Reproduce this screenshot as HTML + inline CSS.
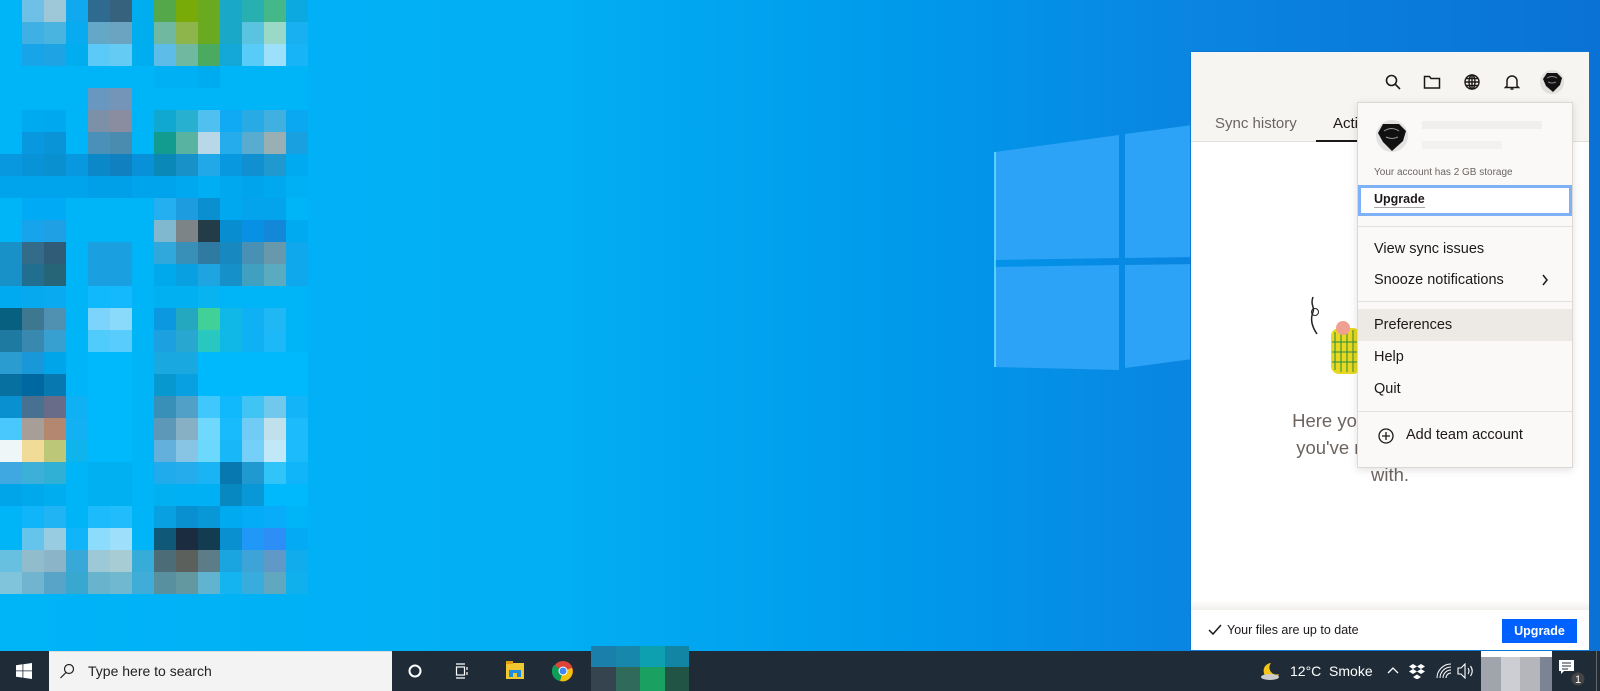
<!DOCTYPE html>
<html><head><meta charset="utf-8"><style>
*{margin:0;padding:0;box-sizing:border-box}
body{width:1600px;height:691px;overflow:hidden;position:relative;font-family:"Liberation Sans",sans-serif;background:linear-gradient(90deg,#00b4f8 0%,#02aef4 35%,#0098ea 58%,#0a84e0 75%,#0a72d4 100%)}
.grid{position:absolute;left:0;top:0;display:grid;grid-template-columns:repeat(14,22px);grid-auto-rows:22px}
.grid div{width:22px;height:22px}
.win{position:absolute;left:1190px;top:51px;width:400px;height:600px;background:#fff;border:1px solid #0a78d7}
.hdr{position:absolute;left:0;top:0;width:398px;height:90px;background:#f7f5f2;border-bottom:1px solid #e3e0dc}
.ic{position:absolute;top:21px}
.menu{position:absolute;left:1357px;top:102px;width:216px;height:366px;background:#faf9f8;border:1px solid #dcd9d5;box-shadow:0 2px 8px rgba(0,0,0,.12);color:#1e1919;font-size:14.5px}
.mi{position:absolute;left:16px}
.sep{position:absolute;left:0;width:214px;height:1px;background:#e4e1dd}
.tb{position:absolute;left:0;top:651px;width:1600px;height:40px;background:#1f2c38}
</style></head><body>
<div class="grid">
<div style="background:#00b4f8"></div><div style="background:#6fc0e6"></div><div style="background:#9ec8d8"></div><div style="background:#10a8ee"></div><div style="background:#2f6b90"></div><div style="background:#36627e"></div><div style="background:#00aef0"></div><div style="background:#55a84a"></div><div style="background:#78aa08"></div><div style="background:#6aaa20"></div><div style="background:#1aa8c8"></div><div style="background:#28b0b0"></div><div style="background:#44b888"></div><div style="background:#0ca8e0"></div>
<div style="background:#00b4f8"></div><div style="background:#3eb0e4"></div><div style="background:#4ab4e0"></div><div style="background:#08aaf0"></div><div style="background:#64a8c8"></div><div style="background:#6aa4c0"></div><div style="background:#00aef0"></div><div style="background:#70b8a0"></div><div style="background:#8eb44c"></div><div style="background:#6aaa20"></div><div style="background:#1aa8c8"></div><div style="background:#5ac4e0"></div><div style="background:#9ad8c8"></div><div style="background:#18b0f0"></div>
<div style="background:#00b4f8"></div><div style="background:#18a4e8"></div><div style="background:#1ea4e4"></div><div style="background:#00aef0"></div><div style="background:#5ccaf8"></div><div style="background:#64ccf4"></div><div style="background:#00aef0"></div><div style="background:#5ebce8"></div><div style="background:#70b8a0"></div><div style="background:#4aaa60"></div><div style="background:#14a8d8"></div><div style="background:#58ccf8"></div><div style="background:#9ce0fc"></div><div style="background:#18b4f8"></div>
<div style="background:#00b4f8"></div><div style="background:#00b4f8"></div><div style="background:#00b4f8"></div><div style="background:#00b4f8"></div><div style="background:#00b4f8"></div><div style="background:#00b4f8"></div><div style="background:#00b4f8"></div><div style="background:#00b0f4"></div><div style="background:#00b0f4"></div><div style="background:#00acf0"></div><div style="background:#00b4f8"></div><div style="background:#00b4f8"></div><div style="background:#00b4f8"></div><div style="background:#00b4f8"></div>
<div style="background:#00b4f8"></div><div style="background:#00b4f8"></div><div style="background:#00b4f8"></div><div style="background:#00b4f8"></div><div style="background:#6898c0"></div><div style="background:#7494b8"></div><div style="background:#00b4f8"></div><div style="background:#00b4f8"></div><div style="background:#00b4f8"></div><div style="background:#00b4f8"></div><div style="background:#00b4f8"></div><div style="background:#00b4f8"></div><div style="background:#00b4f8"></div><div style="background:#00b4f8"></div>
<div style="background:#00b4f8"></div><div style="background:#00aaf0"></div><div style="background:#00a8f0"></div><div style="background:#00b4f8"></div><div style="background:#7c90a8"></div><div style="background:#8a8ca0"></div><div style="background:#00b4f8"></div><div style="background:#10a8d0"></div><div style="background:#28b0d0"></div><div style="background:#50c0f0"></div><div style="background:#10aaf4"></div><div style="background:#28aae4"></div><div style="background:#40b0e0"></div><div style="background:#0aa8f0"></div>
<div style="background:#00b4f8"></div><div style="background:#0898e0"></div><div style="background:#0a94d8"></div><div style="background:#00b4f8"></div><div style="background:#4a90b8"></div><div style="background:#4a8cb0"></div><div style="background:#00b4f8"></div><div style="background:#129c90"></div><div style="background:#58b4a0"></div><div style="background:#b8d8e8"></div><div style="background:#24acec"></div><div style="background:#58acd0"></div><div style="background:#98b0b4"></div><div style="background:#18a0e0"></div>
<div style="background:#0898e0"></div><div style="background:#0892d8"></div><div style="background:#0890d0"></div><div style="background:#0898e0"></div><div style="background:#0a88c8"></div><div style="background:#1080c0"></div><div style="background:#0890d8"></div><div style="background:#0a88b8"></div><div style="background:#1890c8"></div><div style="background:#20a8e8"></div><div style="background:#0898e0"></div><div style="background:#1090d0"></div><div style="background:#2098d0"></div><div style="background:#00aaf0"></div>
<div style="background:#00a4ec"></div><div style="background:#00a4ec"></div><div style="background:#00a4ec"></div><div style="background:#00a4ec"></div><div style="background:#00a0e8"></div><div style="background:#00a0e8"></div><div style="background:#00a4ec"></div><div style="background:#00a4ec"></div><div style="background:#00a8f0"></div><div style="background:#00aef4"></div><div style="background:#00a8f0"></div><div style="background:#00a4ec"></div><div style="background:#00a8f0"></div><div style="background:#00b0f4"></div>
<div style="background:#00b4f8"></div><div style="background:#00aaf4"></div><div style="background:#00aaf4"></div><div style="background:#00b4f8"></div><div style="background:#00b4f8"></div><div style="background:#00b4f8"></div><div style="background:#00b4f8"></div><div style="background:#24b0f0"></div><div style="background:#1e9ce0"></div><div style="background:#0a90d0"></div><div style="background:#00a8f0"></div><div style="background:#04a4ec"></div><div style="background:#04a4ec"></div><div style="background:#00b4f8"></div>
<div style="background:#00b4f8"></div><div style="background:#18a4ec"></div><div style="background:#20a0e4"></div><div style="background:#00b4f8"></div><div style="background:#00b4f8"></div><div style="background:#00b4f8"></div><div style="background:#00b4f8"></div><div style="background:#80b8d0"></div><div style="background:#7c8488"></div><div style="background:#243c48"></div><div style="background:#088ed0"></div><div style="background:#0890e4"></div><div style="background:#1488d8"></div><div style="background:#00aaf0"></div>
<div style="background:#1890c8"></div><div style="background:#326c88"></div><div style="background:#305c78"></div><div style="background:#00b4f8"></div><div style="background:#1aa0e0"></div><div style="background:#1aa0e0"></div><div style="background:#00b4f8"></div><div style="background:#30a8dc"></div><div style="background:#3890b8"></div><div style="background:#2e7aa0"></div><div style="background:#1888c0"></div><div style="background:#4890b4"></div><div style="background:#6898ac"></div><div style="background:#10a8ec"></div>
<div style="background:#1890c8"></div><div style="background:#226e90"></div><div style="background:#266478"></div><div style="background:#00b4f8"></div><div style="background:#1aa0e0"></div><div style="background:#1aa0e0"></div><div style="background:#00b4f8"></div><div style="background:#00a8ec"></div><div style="background:#08a0e0"></div><div style="background:#1ea4e0"></div><div style="background:#1690c8"></div><div style="background:#40a0c0"></div><div style="background:#5aaac0"></div><div style="background:#10a8ec"></div>
<div style="background:#00aaf0"></div><div style="background:#06a8ee"></div><div style="background:#0aaaf0"></div><div style="background:#00b4f8"></div><div style="background:#10b8fc"></div><div style="background:#14b8fc"></div><div style="background:#00b4f8"></div><div style="background:#00b0f0"></div><div style="background:#00b0f0"></div><div style="background:#08b4f0"></div><div style="background:#00b4f8"></div><div style="background:#00b4f8"></div><div style="background:#00b4f8"></div><div style="background:#00b4f8"></div>
<div style="background:#086080"></div><div style="background:#3e7890"></div><div style="background:#5090b0"></div><div style="background:#00b4f8"></div><div style="background:#7cd4fc"></div><div style="background:#8adafc"></div><div style="background:#00b4f8"></div><div style="background:#0c98e0"></div><div style="background:#24a8c0"></div><div style="background:#40d098"></div><div style="background:#10b8e8"></div><div style="background:#10b0f4"></div><div style="background:#20b8f4"></div><div style="background:#00b4f8"></div>
<div style="background:#1e7aa0"></div><div style="background:#3888b0"></div><div style="background:#38a0d0"></div><div style="background:#00b4f8"></div><div style="background:#50ccfc"></div><div style="background:#58ccfc"></div><div style="background:#00b4f8"></div><div style="background:#1ca0e0"></div><div style="background:#28a8d0"></div><div style="background:#28c8c0"></div><div style="background:#10b8e8"></div><div style="background:#10b0f4"></div><div style="background:#1cb8f8"></div><div style="background:#00b4f8"></div>
<div style="background:#2a9cd0"></div><div style="background:#1898d8"></div><div style="background:#00a4e8"></div><div style="background:#00b4f8"></div><div style="background:#00b8fc"></div><div style="background:#00b8fc"></div><div style="background:#00b4f8"></div><div style="background:#1aa8e0"></div><div style="background:#1aa8e0"></div><div style="background:#00b8fc"></div><div style="background:#00b8fc"></div><div style="background:#00b8fc"></div><div style="background:#00b8fc"></div><div style="background:#00b8fc"></div>
<div style="background:#0870a0"></div><div style="background:#0068a0"></div><div style="background:#0878b0"></div><div style="background:#00b4f8"></div><div style="background:#00b8fc"></div><div style="background:#00b8fc"></div><div style="background:#00b4f8"></div><div style="background:#0898d0"></div><div style="background:#08a0e0"></div><div style="background:#00b8fc"></div><div style="background:#00b8fc"></div><div style="background:#00b8fc"></div><div style="background:#00b8fc"></div><div style="background:#00b8fc"></div>
<div style="background:#0890d0"></div><div style="background:#487090"></div><div style="background:#686c88"></div><div style="background:#10b0f4"></div><div style="background:#00b8fc"></div><div style="background:#00b8fc"></div><div style="background:#00b4f8"></div><div style="background:#3890b8"></div><div style="background:#50a0c8"></div><div style="background:#40c8fc"></div><div style="background:#10b8fc"></div><div style="background:#40c4f4"></div><div style="background:#70c8ec"></div><div style="background:#14b4f8"></div>
<div style="background:#48c8fc"></div><div style="background:#a89e98"></div><div style="background:#b48870"></div><div style="background:#14b0f4"></div><div style="background:#00b8fc"></div><div style="background:#00b8fc"></div><div style="background:#00b4f8"></div><div style="background:#5e98b8"></div><div style="background:#88b0c4"></div><div style="background:#70d8fc"></div><div style="background:#18bcfc"></div><div style="background:#70ccf4"></div><div style="background:#c0e0ec"></div><div style="background:#1cbcfc"></div>
<div style="background:#eef6f8"></div><div style="background:#f0dc98"></div><div style="background:#bcc878"></div><div style="background:#10b4ec"></div><div style="background:#00b8fc"></div><div style="background:#00b8fc"></div><div style="background:#00b4f8"></div><div style="background:#64b0dc"></div><div style="background:#88c4e4"></div><div style="background:#6cd8fc"></div><div style="background:#18b8f8"></div><div style="background:#74d0f8"></div><div style="background:#c0e8f8"></div><div style="background:#1cbcfc"></div>
<div style="background:#40a8e0"></div><div style="background:#3cb0d8"></div><div style="background:#30b0d4"></div><div style="background:#00b4f8"></div><div style="background:#00b0f0"></div><div style="background:#00b0f0"></div><div style="background:#00b4f8"></div><div style="background:#20acec"></div><div style="background:#24acec"></div><div style="background:#1ab4f4"></div><div style="background:#0878b0"></div><div style="background:#2098d0"></div><div style="background:#30c4f8"></div><div style="background:#10b4f8"></div>
<div style="background:#00a4e8"></div><div style="background:#00a8ec"></div><div style="background:#00aef0"></div><div style="background:#00b4f8"></div><div style="background:#00b0f0"></div><div style="background:#00b0f0"></div><div style="background:#00b4f8"></div><div style="background:#00b0f0"></div><div style="background:#00b0f4"></div><div style="background:#00b0f4"></div><div style="background:#0888c0"></div><div style="background:#0898d8"></div><div style="background:#00b8fc"></div><div style="background:#00b8fc"></div>
<div style="background:#00b4f8"></div><div style="background:#10b4f8"></div><div style="background:#20b4f4"></div><div style="background:#00b4f8"></div><div style="background:#1cbcfc"></div><div style="background:#20bcfc"></div><div style="background:#00b4f8"></div><div style="background:#08a0e0"></div><div style="background:#0890d0"></div><div style="background:#0898d8"></div><div style="background:#00aaf0"></div><div style="background:#04acf8"></div><div style="background:#08acf8"></div><div style="background:#00b4f8"></div>
<div style="background:#00b4f8"></div><div style="background:#64c4ec"></div><div style="background:#98cce0"></div><div style="background:#10b4f8"></div><div style="background:#8cdcfc"></div><div style="background:#9ee0fc"></div><div style="background:#00b4f8"></div><div style="background:#105878"></div><div style="background:#1c2c40"></div><div style="background:#143c50"></div><div style="background:#0890d0"></div><div style="background:#2098f8"></div><div style="background:#2e8ef8"></div><div style="background:#04aaf4"></div>
<div style="background:#68c0e0"></div><div style="background:#90bccc"></div><div style="background:#8cb4c8"></div><div style="background:#38a8d8"></div><div style="background:#9cc8d8"></div><div style="background:#a8ccd4"></div><div style="background:#38acd8"></div><div style="background:#4c6c78"></div><div style="background:#5c605c"></div><div style="background:#5c7c88"></div><div style="background:#1aa4e0"></div><div style="background:#3ea4d8"></div><div style="background:#6098c8"></div><div style="background:#10acec"></div>
<div style="background:#80c4dc"></div><div style="background:#70b4d0"></div><div style="background:#58a4c8"></div><div style="background:#38a8d0"></div><div style="background:#68b4cc"></div><div style="background:#70b8d0"></div><div style="background:#40acd8"></div><div style="background:#5890a0"></div><div style="background:#6498a0"></div><div style="background:#60b4d0"></div><div style="background:#14b4f0"></div><div style="background:#38acdc"></div><div style="background:#60a8c0"></div><div style="background:#10b0ec"></div>
</div>

<!-- windows logo -->
<svg style="position:absolute;left:990px;top:120px" width="210" height="260">
<polygon points="5,32 129,15 129,138 5,140" fill="#2ca3f6"/>
<polygon points="135,14 210,4 210,137 135,138" fill="#2ca3f6"/>
<polygon points="5,147 129,145 129,250 5,247" fill="#2ca3f6"/>
<polygon points="135,145 210,144 210,238 135,248" fill="#2ca3f6"/>
<line x1="5" y1="32" x2="5" y2="247" stroke="#6ee0ff" stroke-width="1.5"/>
</svg>

<div class="win">
 <div class="hdr">
  <svg class="ic" style="left:193px" width="18" height="18" viewBox="0 0 18 18" fill="none" stroke="#1e1919" stroke-width="1.6"><circle cx="7.5" cy="7.5" r="5"/><path d="M11 11l5 5"/></svg>
  <svg class="ic" style="left:232px" width="18" height="18" viewBox="0 0 18 18" fill="none" stroke="#1e1919" stroke-width="1.5"><path d="M1.5 3.5h5l1.5 2h8.5v9.5h-15z"/></svg>
  <svg class="ic" style="left:272px" width="18" height="18" viewBox="0 0 18 18" fill="none" stroke="#1e1919" stroke-width="1.4"><circle cx="9" cy="9" r="7"/><ellipse cx="9" cy="9" rx="3" ry="7"/><path d="M2 9h14M3 5.5h12M3 12.5h12M9 2v14"/></svg>
  <svg class="ic" style="left:312px" width="18" height="18" viewBox="0 0 18 18" fill="none" stroke="#1e1919" stroke-width="1.5"><path d="M4 13V8a5 5 0 0 1 10 0v5l1.5 1.5h-13z"/><path d="M7.5 16h3"/></svg>
  <svg style="position:absolute;left:348px;top:17px" width="26" height="26" viewBox="0 0 26 26"><circle cx="13" cy="13" r="12" fill="#e2e0de"/><polygon points="4,10 8,4 18,4 23,9 21,16 14,23 7,17" fill="#111"/><path d="M8 9q5-3 10 0M9 13q4 2 8 0" stroke="#888" fill="none"/></svg>
  <div style="position:absolute;left:24px;top:63px;font-size:15px;color:#6a6562">Sync history</div>
  <div style="position:absolute;left:142px;top:63px;font-size:15px;color:#1e1919">Activity</div>
  <div style="position:absolute;left:125px;top:88px;width:45px;height:2px;background:#1e1919"></div>
 </div>
 <div style="position:absolute;left:0;width:398px;top:355px;text-align:center;font-size:18.5px;color:#6d6460;line-height:27px">Here you'll see files that<br>you've recently worked<br>with.</div>
 <svg style="position:absolute;left:112px;top:240px" width="70" height="90"><path d="M10 5c-3 8 2 10 0 15s-3 12 4 22" stroke="#222" fill="none" stroke-width="1.5"/><circle cx="12" cy="20" r="3.5" stroke="#222" fill="none"/><rect x="28" y="36" width="30" height="46" rx="8" fill="#e8d820"/><path d="M32 40v38M38 38v42M44 38v42M50 38v42M29 50h28M29 60h28M29 70h28" stroke="#2a8a40"/><circle cx="40" cy="36" r="7" fill="#f0a090"/></svg>
 <div style="position:absolute;left:0;top:548px;width:398px;height:10px;background:linear-gradient(#fff,#f2efec)"></div>
 <div style="position:absolute;left:0;top:558px;width:398px;height:40px;background:#fff">
  <svg style="position:absolute;left:17px;top:14px" width="14" height="12" viewBox="0 0 14 12" fill="none" stroke="#1e1919" stroke-width="1.5"><path d="M1 6l4 4 8-9"/></svg>
  <div style="position:absolute;left:36px;top:13px;font-size:12.5px;color:#1e1919">Your files are up to date</div>
  <div style="position:absolute;left:311px;top:9px;width:75px;height:24px;background:#0061fe;color:#fff;font-size:12.5px;font-weight:bold;text-align:center;line-height:24px">Upgrade</div>
 </div>
</div>

<div class="menu">
 <svg style="position:absolute;left:17px;top:16px" width="34" height="34" viewBox="0 0 34 34"><circle cx="17" cy="17" r="16" fill="#e4e2e0"/><polygon points="3,14 8,5 24,5 31,12 28,22 17,32 8,23" fill="#111"/><path d="M9 12q8-5 15 0M11 18q6 3 12 0" stroke="#999" fill="none"/></svg>
 <div style="position:absolute;left:64px;top:18px;width:120px;height:8px;background:#f1efed"></div>
 <div style="position:absolute;left:64px;top:38px;width:80px;height:8px;background:#f3f1ef"></div>
 <div style="position:absolute;left:16px;top:64px;font-size:10px;color:#6a6562">Your account has 2 GB storage</div>
 <div style="position:absolute;left:0;top:82px;width:214px;height:31px;border:3px solid #7fb1f6;background:#fff"></div>
 <div style="position:absolute;left:16px;top:89px;font-size:12.5px;font-weight:bold;color:#1e1919;border-bottom:1px solid #aaa;line-height:15px">Upgrade</div>
 <div class="sep" style="top:123px"></div>
 <div class="mi" style="top:138px">View sync issues</div>
 <div class="mi" style="top:169px">Snooze notifications</div>
 <svg style="position:absolute;left:183px;top:171px" width="8" height="12" fill="none" stroke="#1e1919" stroke-width="1.5"><path d="M2 1l4 5-4 5"/></svg>
 <div class="sep" style="top:198px"></div>
 <div style="position:absolute;left:0;top:206px;width:214px;height:32px;background:#edeae6"></div>
 <div class="mi" style="top:214px">Preferences</div>
 <div class="mi" style="top:246px">Help</div>
 <div class="mi" style="top:278px">Quit</div>
 <div class="sep" style="top:308px"></div>
 <svg style="position:absolute;left:20px;top:325px" width="16" height="16" viewBox="0 0 16 16" fill="none" stroke="#1e1919" stroke-width="1.3"><circle cx="8" cy="8" r="7"/><path d="M8 4v8M4 8h8"/></svg>
 <div class="mi" style="left:48px;top:324px">Add team account</div>
</div>

<div class="tb">
 <svg style="position:absolute;left:16px;top:12px" width="16" height="16" viewBox="0 0 16 16" fill="#fff"><path d="M0 2.2l6.5-.9v6.2H0zM7.3 1.2L16 0v7.5H7.3zM0 8.3h6.5v6.3L0 13.7zM7.3 8.3H16V16l-8.7-1.2z"/></svg>
 <div style="position:absolute;left:49px;top:0;width:343px;height:40px;background:#f3f3f3;border-top:1px solid #ddd"></div>
 <svg style="position:absolute;left:59px;top:12px" width="16" height="16" viewBox="0 0 16 16" fill="none" stroke="#222" stroke-width="1.2"><circle cx="10" cy="6" r="4.5"/><path d="M7 9.5L1.5 15"/></svg>
 <div style="position:absolute;left:88px;top:12px;font-size:14px;color:#222">Type here to search</div>
 <svg style="position:absolute;left:408px;top:13px" width="14" height="14"><circle cx="7" cy="7" r="5.5" fill="none" stroke="#fff" stroke-width="2"/></svg>
 <svg style="position:absolute;left:455px;top:12px" width="14" height="16" fill="none" stroke="#fff" stroke-width="1.2"><path d="M1 1h9M1 15h9"/><rect x="1.5" y="4" width="8" height="8"/><path d="M12 4v3M12 9v3"/></svg>
 <svg style="position:absolute;left:506px;top:10px" width="18" height="20"><rect x="0" y="2" width="18" height="16" fill="#f2c830"/><rect x="0" y="0" width="7" height="3" fill="#e0a010"/><rect x="3" y="9" width="12" height="7" fill="#1d8de0"/><rect x="7" y="12" width="4" height="4" fill="#f2c830"/></svg>
 <svg style="position:absolute;left:552px;top:9px" width="22" height="22" viewBox="0 0 22 22"><circle cx="11" cy="11" r="10" fill="#db4437"/><path d="M11 11L20 8A10 10 0 0 1 8 21z" fill="#f4c20d"/><path d="M11 11L8 21A10 10 0 0 1 2 5z" fill="#0f9d58"/><circle cx="11" cy="11" r="4.5" fill="#fff"/><circle cx="11" cy="11" r="3.5" fill="#4285f4"/></svg>
 <div style="position:absolute;left:591px;top:-5px;width:98px;height:21px;display:flex"><div style="flex:1;background:#1a7fab"></div><div style="flex:1;background:#1788ac"></div><div style="flex:1;background:#0ca0b0"></div><div style="flex:1;background:#1284a4"></div></div>
 <div style="position:absolute;left:591px;top:16px;width:98px;height:24px;display:flex"><div style="flex:1;background:#364450"></div><div style="flex:1;background:#2f6a5a"></div><div style="flex:1;background:#1aa060"></div><div style="flex:1;background:#225446"></div></div>
 <svg style="position:absolute;left:1259px;top:10px" width="22" height="20"><path d="M12 2a8 8 0 1 0 8 11a7 7 0 0 1-8-11z" fill="#f5c518"/><ellipse cx="11" cy="16" rx="9" ry="3" fill="#ccc"/></svg>
 <div style="position:absolute;left:1290px;top:12px;font-size:14px;color:#fff">12°C&nbsp; Smoke</div>
 <svg style="position:absolute;left:1387px;top:15px" width="12" height="8" fill="none" stroke="#fff" stroke-width="1.3"><path d="M1 7l5-5 5 5"/></svg>
 <svg style="position:absolute;left:1409px;top:12px" width="16" height="16" fill="#fff"><path d="M4 1l4 2.5-4 2.5-4-2.5zM12 1l4 2.5-4 2.5-4-2.5zM4 6l4 2.5-4 2.5-4-2.5zM12 6l4 2.5-4 2.5-4-2.5zM8 11.5l4 2.5-4 2.5-4-2.5z"/></svg>
 <svg style="position:absolute;left:1436px;top:12px" width="16" height="16" fill="none" stroke="#fff" stroke-width="1"><path d="M1 15A14 14 0 0 1 15 1M4 15A11 11 0 0 1 15 4M7 15A8 8 0 0 1 15 7M10 15a5 5 0 0 1 5-5"/></svg>
 <svg style="position:absolute;left:1457px;top:12px" width="18" height="16" fill="none" stroke="#fff" stroke-width="1.1"><path d="M1 5h3l4-4v14l-4-4H1zM11 5q2 3 0 6M13.5 3q3.5 5 0 10"/></svg>
 <div style="position:absolute;left:1481px;top:5px;width:71px;height:35px;display:flex"><div style="flex:1;background:#a0a4ac"></div><div style="flex:1;background:#ccced4"></div><div style="flex:1;background:#b4b6bc"></div><div style="flex:.6;background:#7c8494"></div></div>
 <div style="position:absolute;left:1481px;top:0;width:71px;height:6px;background:#fff"></div>
 <svg style="position:absolute;left:1558px;top:8px" width="30" height="28"><path d="M1 1h15v11H6l-3 3v-3H1z" fill="#fff"/><path d="M4 4h9M4 7h9M4 10h6" stroke="#1f2c38"/><circle cx="20" cy="20" r="7" fill="#444" stroke="#1f2c38"/><text x="17" y="24" fill="#fff" font-size="11" font-family="Liberation Sans">1</text></svg>
 <div style="position:absolute;left:1596px;top:0;width:1px;height:40px;background:#666"></div>
</div>
</body></html>
